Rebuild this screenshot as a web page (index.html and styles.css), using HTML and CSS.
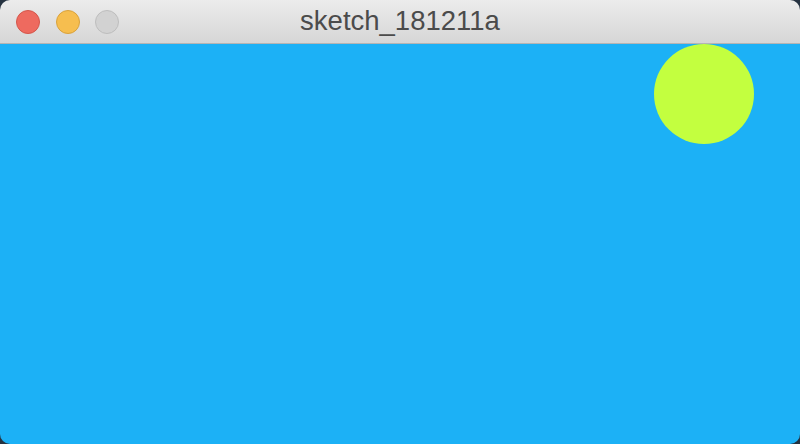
FILE: index.html
```html
<!DOCTYPE html>
<html>
<head>
<meta charset="utf-8">
<link rel="stylesheet" href="styles.css">
</head>
<body>
<div class="window">
  <div class="titlebar">
    <div class="lights">
      <span class="light red"></span>
      <span class="light yellow"></span>
      <span class="light gray"></span>
    </div>
    <div class="title">sketch_181211a</div>
  </div>
  <div class="canvas">
    <div class="ball"></div>
  </div>
</div>
</body>
</html>
```
FILE: styles.css
```css
html, body {
  margin: 0;
  padding: 0;
  background: #263341;
  width: 800px;
  height: 444px;
  overflow: hidden;
}
.window {
  width: 800px;
  height: 444px;
  border-radius: 10px;
  overflow: hidden;
  display: flex;
  flex-direction: column;
}
.titlebar {
  height: 43px;
  flex: none;
  background: linear-gradient(#ececec, #d6d6d6);
  border-bottom: 1px solid #b4b4b4;
  position: relative;
  display: flex;
  align-items: center;
  justify-content: center;
}
.lights {
  position: absolute;
  left: 16px;
  top: 10px;
  display: flex;
  gap: 15.5px;
}
.light {
  width: 22px;
  height: 22px;
  border-radius: 50%;
  border: 1px solid;
}
.red { background: #ee6a5f; border-color: #d4564b; }
.yellow { background: #f6be4f; border-color: #d9a23c; }
.gray { background: #d2d2d2; border-color: #bdbdbd; }
.title {
  font-family: "Liberation Sans", Arial, sans-serif;
  font-size: 27.5px;
  color: #4b4b4b;
  margin-top: -1px;
}
.canvas {
  flex: 1;
  background: #1cb1f6;
  display: flex;
  justify-content: flex-end;
  align-items: flex-start;
  padding-right: 46px;
}
.ball {
  width: 100px;
  height: 100px;
  border-radius: 50%;
  background: #c3ff3f;
}
```
